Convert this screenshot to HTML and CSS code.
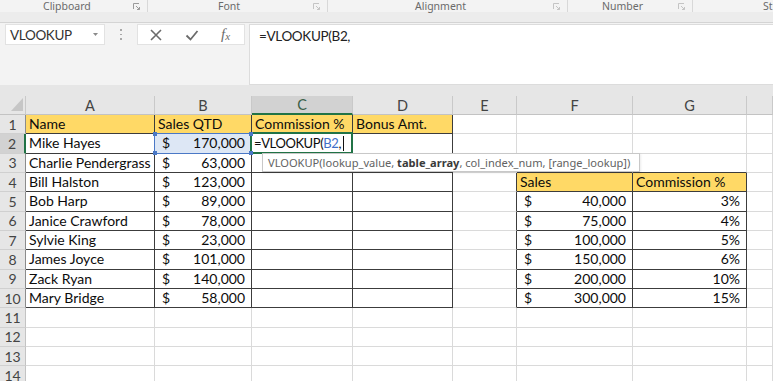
FILE: index.html
```html
<!DOCTYPE html>
<html>
<head>
<meta charset="utf-8">
<link rel="stylesheet" href="styles.css">
</head>
<body>
<div class="app">
  <div class="ribbon">
    <div class="grp g1"><span class="glabel">Clipboard</span><svg class="launch" width="7" height="7" viewBox="0 0 7 7"><path d="M0.5 6V0.5H6" fill="none" stroke="#9a9a9a"/><path d="M3 3L6.5 6.5M6.5 4v2.5H4" fill="none" stroke="#9a9a9a"/></svg></div>
    <div class="grp g2"><span class="glabel">Font</span><svg class="launch" width="7" height="7" viewBox="0 0 7 7"><path d="M0.5 6V0.5H6" fill="none" stroke="#c4c4c4"/><path d="M3 3L6.5 6.5M6.5 4v2.5H4" fill="none" stroke="#c4c4c4"/></svg></div>
    <div class="grp g3"><span class="glabel">Alignment</span><svg class="launch" width="7" height="7" viewBox="0 0 7 7"><path d="M0.5 6V0.5H6" fill="none" stroke="#c4c4c4"/><path d="M3 3L6.5 6.5M6.5 4v2.5H4" fill="none" stroke="#c4c4c4"/></svg></div>
    <div class="grp g4"><span class="glabel">Number</span><svg class="launch" width="7" height="7" viewBox="0 0 7 7"><path d="M0.5 6V0.5H6" fill="none" stroke="#c4c4c4"/><path d="M3 3L6.5 6.5M6.5 4v2.5H4" fill="none" stroke="#c4c4c4"/></svg></div>
    <div class="grp g5"><span class="glabel">St</span></div>
  </div>
  <div class="ribbon-foot"></div>
  <div class="fbar">
    <div class="namebox"><span class="caps">VLOOKUP</span><svg width="5" height="3" viewBox="0 0 5 3"><path d="M0 0h5L2.5 3z" fill="#8a8a8a"/></svg></div>
    <div class="dots"><i></i><i></i><i></i></div>
    <div class="btns">
      <svg width="14" height="14" viewBox="0 0 14 14"><path d="M2 2L12 12M12 2L2 12" stroke="#6b6b6b" stroke-width="1.6" fill="none"/></svg>
      <svg width="14" height="14" viewBox="0 0 14 14"><path d="M1.5 7.5L5.5 11.5L12.5 3" stroke="#6b6b6b" stroke-width="1.8" fill="none"/></svg>
      <span class="fx">f<sub>x</sub></span>
    </div>
    <div class="finput"><span class="caps">=VLOOKUP(B2,</span></div>
  </div>
  <div class="hband"></div>
  <div class="sheet">
    <div class="hd corner"><svg width="12" height="13" viewBox="0 0 12 13"><path d="M12 0V13H0z" fill="#c6c6c6"/></svg></div>
    <div class="hd">A</div><div class="hd">B</div><div class="hd hsel">C</div><div class="hd">D</div><div class="hd">E</div><div class="hd">F</div><div class="hd">G</div><div class="hd"></div>

    <div class="rh rt">1</div><div class="c t gold">Name</div><div class="c t gold">Sales QTD</div><div class="c t gold">Commission %</div><div class="c t gold">Bonus Amt.</div><div class="c"></div><div class="c"></div><div class="c"></div><div class="c"></div>

    <div class="rh rt rsel">2</div><div class="c t">Mike Hayes</div><div class="c t acc ref"><span>$</span><span>170,000</span><i class="hdl h1"></i><i class="hdl h2"></i><i class="hdl h3"></i><i class="hdl h4"></i></div><div class="c t active"><span class="caps sm">=VLOOKUP(<span class="blue">B2</span>,</span><span class="caret"></span></div><div class="c t"></div><div class="c"></div><div class="c"></div><div class="c"></div><div class="c"></div>

    <div class="rh rt">3</div><div class="c t">Charlie Pendergrass</div><div class="c t acc"><span>$</span><span>63,000</span></div><div class="c t"></div><div class="c t"></div><div class="c"></div><div class="c tt"></div><div class="c tt"></div><div class="c"></div>

    <div class="rh rt">4</div><div class="c t">Bill Halston</div><div class="c t acc"><span>$</span><span>123,000</span></div><div class="c t"></div><div class="c t"></div><div class="c tl"></div><div class="c t gold">Sales</div><div class="c t gold">Commission %</div><div class="c"></div>

    <div class="rh rt">5</div><div class="c t">Bob Harp</div><div class="c t acc"><span>$</span><span>89,000</span></div><div class="c t"></div><div class="c t"></div><div class="c tl"></div><div class="c t acc"><span>$</span><span>40,000</span></div><div class="c t pct">3%</div><div class="c"></div>

    <div class="rh rt">6</div><div class="c t">Janice Crawford</div><div class="c t acc"><span>$</span><span>78,000</span></div><div class="c t"></div><div class="c t"></div><div class="c tl"></div><div class="c t acc"><span>$</span><span>75,000</span></div><div class="c t pct">4%</div><div class="c"></div>

    <div class="rh rt">7</div><div class="c t">Sylvie King</div><div class="c t acc"><span>$</span><span>23,000</span></div><div class="c t"></div><div class="c t"></div><div class="c tl"></div><div class="c t acc"><span>$</span><span>100,000</span></div><div class="c t pct">5%</div><div class="c"></div>

    <div class="rh rt">8</div><div class="c t">James Joyce</div><div class="c t acc"><span>$</span><span>101,000</span></div><div class="c t"></div><div class="c t"></div><div class="c tl"></div><div class="c t acc"><span>$</span><span>150,000</span></div><div class="c t pct">6%</div><div class="c"></div>

    <div class="rh rt">9</div><div class="c t">Zack Ryan</div><div class="c t acc"><span>$</span><span>140,000</span></div><div class="c t"></div><div class="c t"></div><div class="c tl"></div><div class="c t acc"><span>$</span><span>200,000</span></div><div class="c t pct">10%</div><div class="c"></div>

    <div class="rh rt">10</div><div class="c t">Mary Bridge</div><div class="c t acc"><span>$</span><span>58,000</span></div><div class="c t"></div><div class="c t"></div><div class="c tl"></div><div class="c t acc"><span>$</span><span>300,000</span></div><div class="c t pct">15%</div><div class="c"></div>

    <div class="rh">11</div><div class="c"></div><div class="c"></div><div class="c"></div><div class="c"></div><div class="c"></div><div class="c"></div><div class="c"></div><div class="c"></div>
    <div class="rh">12</div><div class="c"></div><div class="c"></div><div class="c"></div><div class="c"></div><div class="c"></div><div class="c"></div><div class="c"></div><div class="c"></div>
    <div class="rh">13</div><div class="c"></div><div class="c"></div><div class="c"></div><div class="c"></div><div class="c"></div><div class="c"></div><div class="c"></div><div class="c"></div>
    <div class="rh">14</div><div class="c"></div><div class="c"></div><div class="c"></div><div class="c"></div><div class="c"></div><div class="c"></div><div class="c"></div><div class="c"></div>

    <div class="tip">VLOOKUP(lookup_value, <b>table_array</b>, col_index_num, [range_lookup])</div>
  </div>
</div>
</body>
</html>
```

FILE: styles.css
```css
* { box-sizing: border-box; }
html, body { margin: 0; padding: 0; }
body { width: 773px; height: 381px; overflow: hidden; background: #f3f3f3; font-family: Lato, "Open Sans", sans-serif; }
.app { width: 773px; height: 381px; overflow: hidden; }

.ribbon { height: 12px; display: flex; background: #f3f3f3; }
.grp { display: flex; align-items: center; height: 12px; border-right: 1px solid #d8d8d8; }
.glabel { font-family: "Noto Sans", sans-serif; font-size: 10.5px; color: #6a6a6a; line-height: 12px; white-space: nowrap; }
.launch { margin-left: auto; margin-right: 7px; }
.g1 { width: 148px; padding-left: 43px; }
.g2 { width: 180px; padding-left: 70px; }
.g3 { width: 240px; padding-left: 87px; }
.g4 { width: 125px; padding-left: 34px; }
.g5 { flex: 1; padding-left: 70px; border-right: none; }
.ribbon-foot { height: 11px; background: #ececec; border-bottom: 1px solid #d4d4d4; }

.caps { font-size: 13.5px; letter-spacing: -0.35px; }
.caps.sm { font-size: 13px; letter-spacing: -0.4px; }

.fbar { height: 62px; display: flex; align-items: flex-start; background: #f3f3f3; padding-top: 1px; }
.namebox { width: 100px; height: 21px; margin-left: 5px; background: #fff; border: 1px solid #e2e2e2; display: flex; align-items: center; justify-content: space-between; padding: 0 6px 0 4px; font-size: 14px; color: #333; }
.dots { width: 32px; height: 21px; display: flex; flex-direction: column; align-items: center; justify-content: center; gap: 3px; }
.dots i { width: 1.5px; height: 1.5px; background: #a8a8a8; display: block; }
.btns { width: 108px; height: 21px; background: #fff; border: 1px solid #e2e2e2; display: flex; align-items: center; padding-left: 11px; gap: 22px; }
.fx { font-family: "Liberation Serif", serif; font-style: italic; font-size: 15px; color: #6b6b6b; line-height: 14px; }
.fx sub { font-size: 11px; vertical-align: -1px; }
.finput { flex: 1; height: 61px; margin-left: 4px; background: #fff; border: 1px solid #dcdcdc; border-right: none; padding: 2px 0 0 9px; font-size: 14px; color: #222; line-height: 18px; }

.hband { height: 11px; background: #e6e6e6; }
.sheet { position: relative; display: grid; grid-template-columns: 26px 129px 97px 101px 100px 64px 116px 114px 26px; grid-template-rows: 19px; grid-auto-rows: 19.33px; background: #fff; font-size: 14px; color: #0c0c0c; }
.hd { background: #e6e6e6; border-right: 1px solid #c9c9c9; border-bottom: 1px solid #c3c3c3; color: #444; display: flex; align-items: center; justify-content: center; font-size: 14.5px; }
.corner { justify-content: flex-end; align-items: flex-end; padding: 0 2px 3px 0; }
.hsel { background: #d2d2d2; border-bottom: 2px solid #217346; color: #3b5f48; }
.rh { background: #e6e6e6; border-right: 1px solid #c3c3c3; border-bottom: 1px solid #d0d0d0; color: #444; display: flex; align-items: center; justify-content: center; font-size: 14px; }
.rh.rt { border-right-color: #8c8c8c; }
.rsel { background: #d2d2d2; border-right: 2px solid #217346 !important; }
.c { border-right: 1px solid #dadada; border-bottom: 1px solid #dadada; display: flex; align-items: center; padding-left: 3px; white-space: nowrap; line-height: 18px; }
.c.t { border-right-color: #3c3c3c; border-bottom-color: #3c3c3c; }
.c.tl { border-right-color: #3c3c3c; }
.c.tt { border-bottom-color: #3c3c3c; }
.gold { background: #ffd966; }
.acc { justify-content: space-between; padding: 0 6px 0 7px; }
.pct { justify-content: flex-end; padding-right: 6px; }
.blue { color: #3f6fc8; }
.caret { display: inline-block; width: 1px; height: 15px; background: #111; margin-left: 2px; }

.active { position: relative; padding-left: 2px; }
.active::after { content: ""; position: absolute; left: -2px; top: -2px; right: -1px; bottom: -1px; border: 2px solid #217346; }
.ref { position: relative; background: #dde7f5; }
.ref::after { content: ""; position: absolute; left: -1px; top: -1px; right: -1px; bottom: -1px; border: 1px solid #4a78c6; }
.hdl { position: absolute; width: 4px; height: 4px; background: #4a78c6; z-index: 1; }
.h1 { left: -2px; top: -2px; }
.h2 { right: -2px; top: -2px; }
.h3 { left: -2px; bottom: -2px; }
.h4 { right: -2px; bottom: -2px; }

.tip { position: absolute; left: 262px; top: 57px; width: 378px; height: 19px; background: #fff; border: 1px solid #c8c8c8; box-shadow: 1px 1px 2px rgba(0,0,0,0.08); font-family: "Noto Sans", sans-serif; font-size: 11.1px; color: #626262; line-height: 17px; padding-left: 5px; white-space: nowrap; z-index: 3; }
.tip b { color: #3a3a3a; }
```
